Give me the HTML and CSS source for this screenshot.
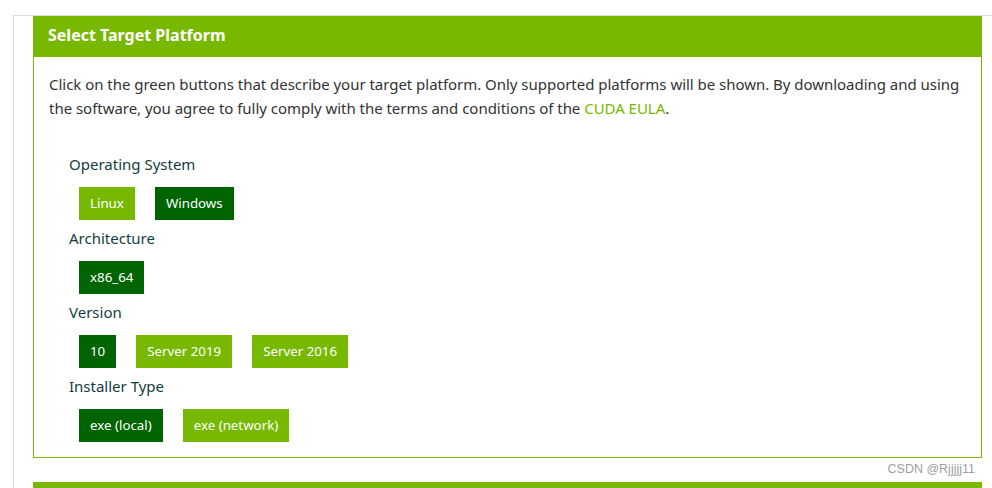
FILE: index.html
```html
<!DOCTYPE html>
<html lang="en">
<head>
  <meta charset="UTF-8">
  <meta name="viewport" content="width=device-width, initial-scale=1.0">
  <title>CUDA Toolkit Downloads</title>
  <link rel="stylesheet" href="styles.css">
</head>
<body>
  <div class="page">
    <div class="panel">
      <div class="panel-head">Select Target Platform</div>
      <div class="panel-body">
        <p class="intro">Click on the green buttons that describe your target platform. Only supported platforms will be shown. By downloading and using the software, you agree to fully comply with the terms and conditions of the <a href="#">CUDA EULA</a>.</p>

        <div class="option">
          <div class="option-label">Operating System</div>
          <div class="buttons">
            <span class="btn">Linux</span>
            <span class="btn active">Windows</span>
          </div>
        </div>
        <div class="option">
          <div class="option-label">Architecture</div>
          <div class="buttons">
            <span class="btn active">x86_64</span>
          </div>
        </div>
        <div class="option">
          <div class="option-label">Version</div>
          <div class="buttons">
            <span class="btn active">10</span>
            <span class="btn">Server 2019</span>
            <span class="btn">Server 2016</span>
          </div>
        </div>
        <div class="option">
          <div class="option-label">Installer Type</div>
          <div class="buttons">
            <span class="btn active">exe (local)</span>
            <span class="btn">exe (network)</span>
          </div>
        </div>
      </div>
    </div>
    <!-- next step panel, only its header shows -->
    <div class="panel next">
      <div class="panel-head"></div>
    </div>
  </div>
  <div class="watermark">CSDN @Rjjjjj11</div>
</body>
</html>
```

FILE: styles.css
```css
html, body {
  overflow: hidden;
}
body {
  margin: 0;
  font-family: "Noto Sans", sans-serif;
  background: #fff;
}
.page {
  margin: 15px 0 0 13px;
  border-top: 1px solid #dcdcdc;
  border-left: 1px solid #dcdcdc;
  padding-left: 19px;
  height: 472px;
  overflow: hidden;
}
.panel {
  width: 949px;
}
.panel-head {
  background-color: #76b900;
  color: #fff;
  font-weight: bold;
  font-size: 16px;
  height: 41px;
  line-height: 39px;
  padding-left: 15px;
}
.panel-body {
  border: 1px solid #76b900;
  border-top: none;
  padding: 15px;
}
.intro {
  margin: 0 0 33px 0;
  font-size: 15px;
  letter-spacing: -0.03px;
  line-height: 24px;
  color: #333;
}
.intro a {
  color: #76b900;
  text-decoration: none;
}
.option {
  margin-left: 20px;
  margin-top: 7px;
}
.option:first-of-type {
  margin-top: 0;
}
.option-label {
  font-size: 15px;
  line-height: 22px;
  color: #143c3f;
  margin-bottom: 12px;
}
.buttons {
  display: flex;
  gap: 20px;
  margin-left: 10px;
}
.btn {
  background-color: #76b900;
  color: #fff;
  font-size: 13.3px;
  height: 33px;
  line-height: 33px;
  padding: 0 11px;
}
.btn.active {
  background-color: #006400;
}
.panel.next {
  margin-top: 24px;
}
.watermark {
  position: absolute;
  top: 462px;
  right: 17px;
  font-family: "Liberation Sans", Arial, sans-serif;
  font-size: 12.5px;
  color: #a0a0a0;
}
```
